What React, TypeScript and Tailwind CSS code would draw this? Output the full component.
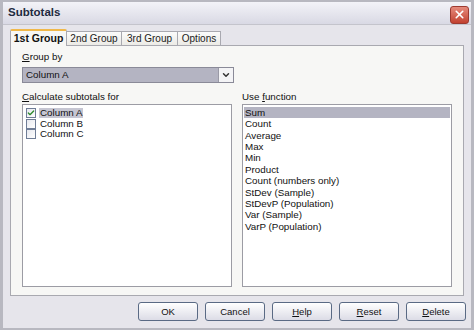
import { ChevronDown, Check, X } from "lucide-react";

const functions = [
  "Sum",
  "Count",
  "Average",
  "Max",
  "Min",
  "Product",
  "Count (numbers only)",
  "StDev (Sample)",
  "StDevP (Population)",
  "Var (Sample)",
  "VarP (Population)",
];

const columns = ["Column A", "Column B", "Column C"];

const tabs = [
  { label: "2nd Group", w: "w-[55px]" },
  { label: "3rd Group", w: "w-[56px]" },
  { label: "Options", w: "w-[43px]" },
];

function Mn({ text, at }: { text: string; at: number }) {
  // underline the mnemonic letter
  return (
    <span className="whitespace-pre">
      {text.slice(0, at)}
      <span className="underline">{text[at]}</span>
      {text.slice(at + 1)}
    </span>
  );
}

function Btn({ children }: { children: React.ReactNode }) {
  return (
    <button className="w-[60px] h-[19px] rounded-[3px] border border-[#5a6a84] bg-gradient-to-b from-[#ffffff] to-[#dcdce6] text-[9.5px] text-[#111] leading-none">
      {children}
    </button>
  );
}

export default function App() {
  return (
    <div
      className="w-[474px] h-[330px] bg-[#e6e5eb] border-t-[2px] border-l-[3px] border-r-[3px] border-b-[2px] border-[#b8b8c0] flex flex-col overflow-hidden"
      style={{ fontFamily: '"Liberation Sans", Arial, sans-serif' }}
    >
      {/* Title bar */}
      <div className="h-[23px] shrink-0 flex items-center justify-between pl-[5px] pr-[2px] bg-gradient-to-b from-[#f3f3f8] to-[#d9d9e4] border-b border-[#c4c4cc]">
        <span className="text-[11.5px] font-bold text-[#1e2a40]">Subtotals</span>
        <div className="w-[19px] h-[18px] mt-[3px] rounded-[3px] bg-gradient-to-b from-[#e58a7c] to-[#c2402f] border border-[#9c3a30] flex items-center justify-center">
          <X className="w-[13px] h-[13px] text-white" strokeWidth={3} />
        </div>
      </div>

      <div className="flex-1 flex flex-col px-[7px] pt-[4px]">
        {/* Tabs */}
        <div className="flex items-end h-[16px]">
          <div className="w-[57px] h-[17px] bg-[#f7f7f5] border border-b-0 border-[#a9a9b0] border-t-[2px] border-t-[#f0b84a] rounded-t-[2px] text-[10.5px] font-bold text-[#111] flex items-center justify-center relative z-10 -mb-px">
            1st Group
          </div>
          {tabs.map((t) => (
            <div
              key={t.label}
              className={
                t.w +
                " h-[14px] bg-gradient-to-b from-[#fbfbfb] to-[#ecebe6] border border-l-0 border-b-0 border-[#a9a9b0] text-[10px] text-[#222] flex items-center justify-center"
              }
            >
              {t.label}
            </div>
          ))}
        </div>

        {/* Panel */}
        <div className="h-[251px] bg-[#f7f7f5] border border-[#a9a9b0] px-[11px] pt-[4px] flex flex-col text-[9.8px] text-[#111]">
          <div className="h-[14px] flex items-center">
            <Mn text="Group by" at={0} />
          </div>
          <div className="mt-[3px] w-[212px] h-[16px] border border-[#8a8a98] bg-[#b4b4c2] flex items-center">
            <span className="flex-1 pl-[3px]">Column A</span>
            <div className="w-[15px] h-[14px] bg-[#f4f4f6] border-l border-[#9a9aa6] flex items-center justify-center">
              <ChevronDown className="w-[10px] h-[10px] text-[#333]" strokeWidth={3.5} />
            </div>
          </div>

          <div className="flex gap-[10px] mt-[7px] flex-1 pb-[8px]">
            <div className="w-[212px] flex flex-col">
              <div className="h-[14px] flex items-center">
                <Mn text="Calculate subtotals for" at={0} />
              </div>
              <div className="flex-1 bg-white border border-[#9c9ca4] pt-[3px] pl-[3px]">
                {columns.map((c, i) => (
                  <div key={c} className="h-[10.5px] flex items-center gap-[3px] leading-none">
                    <div className="w-[10px] h-[10px] border border-[#6f7d96] bg-gradient-to-br from-[#e6e8ee] to-[#ffffff] flex items-center justify-center">
                      {i === 0 && <Check className="w-[8px] h-[8px] text-[#2d8a2d]" strokeWidth={4} />}
                    </div>
                    <span className={i === 0 ? "bg-[#c6c6d2] px-px" : "px-px"}>{c}</span>
                  </div>
                ))}
              </div>
            </div>
            <div className="w-[212px] flex flex-col">
              <div className="h-[14px] flex items-center">
                <Mn text="Use function" at={4} />
              </div>
              <div className="flex-1 bg-white border border-[#9c9ca4] px-[1px] pt-[2px]">
                {functions.map((f, i) => (
                  <div
                    key={f}
                    className={
                      "h-[11.4px] flex items-center pl-[1px] leading-none " +
                      (i === 0 ? "bg-[#b4b4c2]" : "")
                    }
                  >
                    {f}
                  </div>
                ))}
              </div>
            </div>
          </div>
        </div>

        {/* Buttons */}
        <div className="flex justify-end gap-[7px] mt-[6px] -mr-[2px]">
          <Btn>OK</Btn>
          <Btn>Cancel</Btn>
          <Btn>
            <Mn text="Help" at={0} />
          </Btn>
          <Btn>
            <Mn text="Reset" at={0} />
          </Btn>
          <Btn>
            <Mn text="Delete" at={0} />
          </Btn>
        </div>
      </div>
    </div>
  );
}
